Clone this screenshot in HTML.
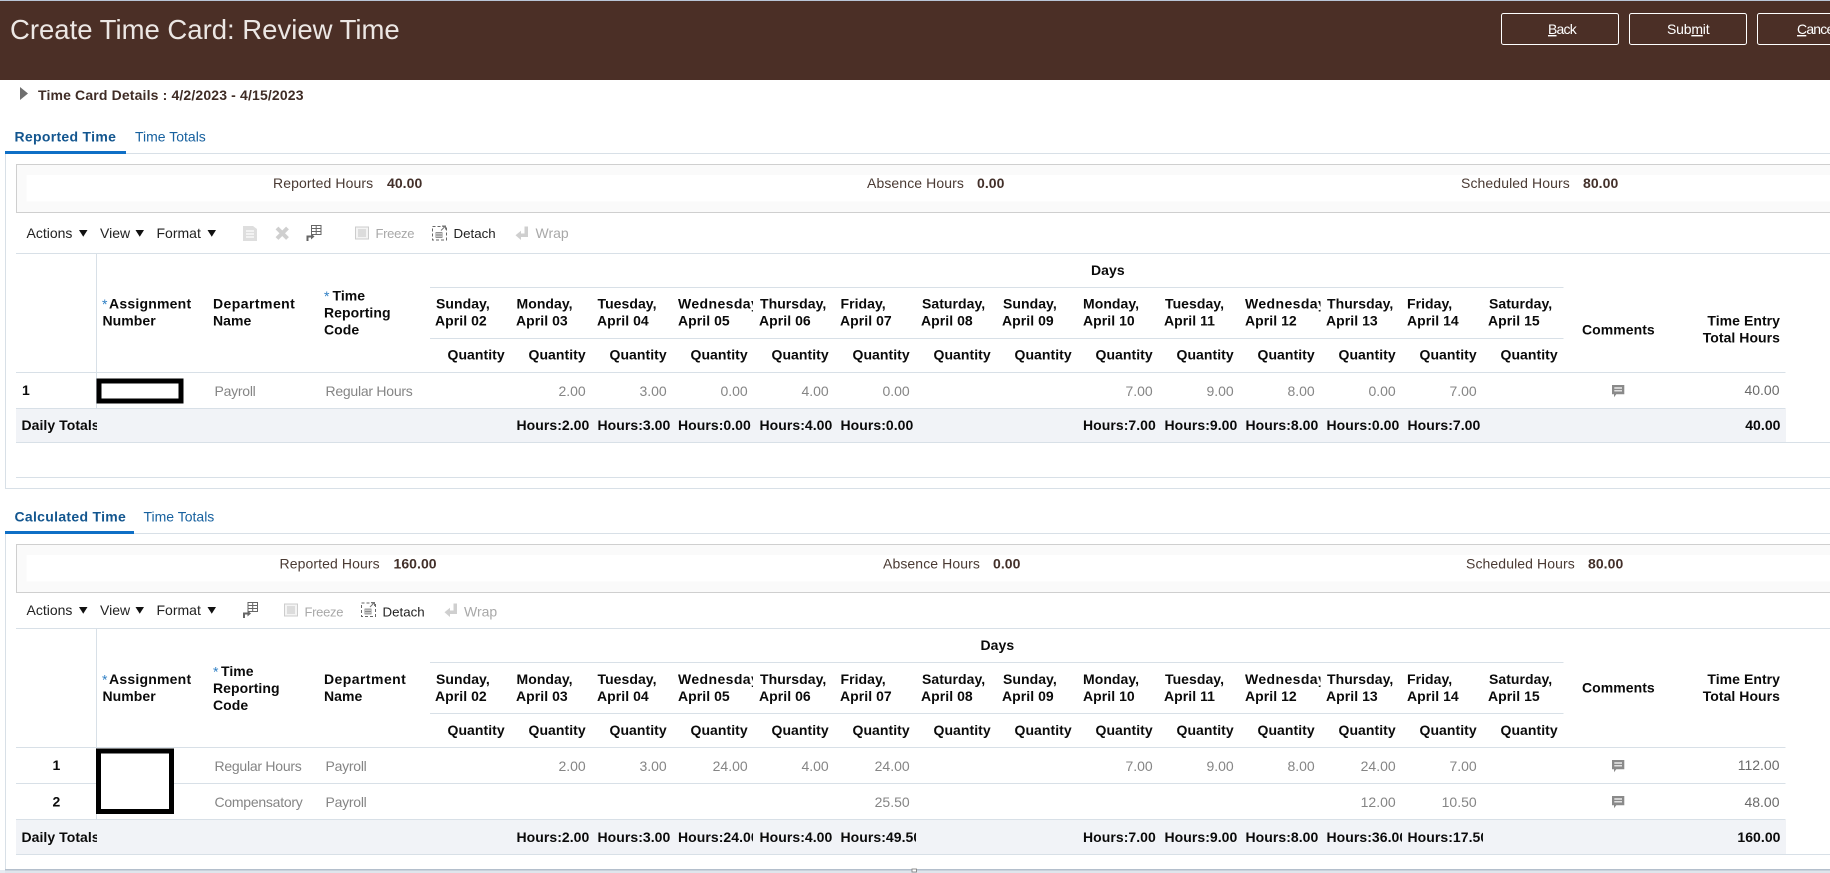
<!DOCTYPE html>
<html lang="en">
<head>
<meta charset="utf-8">
<title>Create Time Card: Review Time</title>
<style>
html,body{margin:0;padding:0;background:#fff;width:1830px;height:873px;overflow:hidden}
svg{display:block}
text{font-family:"Liberation Sans",Arial,sans-serif;font-size:14px;fill:#000}
.r{text-anchor:end}
.b{font-weight:700;fill:#0a0a0a;letter-spacing:.05px}
.v{fill:#858585}
.vt{fill:#858585;letter-spacing:-.25px}
.tot{fill:#6a6a6a}
.lab{fill:#4a3a33;letter-spacing:.1px}
.val{font-weight:700;fill:#43302a;letter-spacing:.05px}
.tb{fill:#222}
.dis{fill:#a8a8a8}
.fr{font-size:13px;letter-spacing:-.3px}
.de{font-size:13.3px}
.btn{fill:#fff;letter-spacing:-.2px}
.btn2{fill:#fff;letter-spacing:-.8px}
.ln{stroke:#d8e0e7;stroke-width:1;fill:none}
.u{text-decoration:underline}
.tabA{font-weight:700;fill:#13568f;letter-spacing:.3px}
.tab{fill:#17619f}
.star{fill:#2f7fc4}
.as{letter-spacing:.22px}
.dp{letter-spacing:.45px}
.wd{letter-spacing:.4px}
</style>
</head>
<body>
<svg width="1830" height="873" viewBox="0 0 1830 873" xmlns="http://www.w3.org/2000/svg">
<defs>
<clipPath id="c0"><rect x="16" y="0" width="81" height="873"/></clipPath>
<clipPath id="c3"><rect x="673" y="0" width="80" height="873"/></clipPath>
<clipPath id="c5"><rect x="835" y="0" width="81" height="873"/></clipPath>
<clipPath id="c10"><rect x="1240" y="0" width="80.500" height="873"/></clipPath>
<clipPath id="c11"><rect x="1321" y="0" width="81" height="873"/></clipPath>
<clipPath id="c12"><rect x="1402" y="0" width="81" height="873"/></clipPath>
<g id="cm"><path d="M0 0h12.300v9.300H4.300L2 12.300V9.300H0z" fill="#8a8a8a"/><path d="M2.300 3h7.700M2.300 5.800h7.700" stroke="#fff" stroke-width="1.200"/></g>
<g id="grid"><path d="M5.500 .5h9.500v9H5.500zM5.500 3.500h9.500M5.500 6.500h9.500M10.200 .5v9" fill="none" stroke="#666" stroke-width="1"/><path d="M1.500 16v-4.500H5.500" fill="none" stroke="#666" stroke-width="2"/><path d="M5 8.500l3.500 3-3.500 3z" fill="#666"/></g>
<g id="frz"><rect x=".5" y=".5" width="13" height="12" fill="#f4f4f4" stroke="#ccc"/><path d="M4 2.500v8M6 2.500v8M8 2.500v8M10 2.500v8" stroke="#c4c4c4" stroke-width="1"/></g>
<g id="det"><rect x=".5" y="2" width="14" height="13.500" fill="none" stroke="#666" stroke-dasharray="3 2"/><path d="M4 8h6v5H4zM4 10.500h6M6 8v5M8 8v5" fill="none" stroke="#777" stroke-width=".8"/><path d="M9 6l4-4M10 1.500h3.500V5" fill="none" stroke="#777" stroke-width="1"/></g>
<g id="wrp"><path d="M12.500 0v10.500H5.500V13.500L0 8.800 5.500 4.200V7h3.500V0z" fill="#cfcfcf"/></g>
</defs>

<!-- header -->
<rect x="0" y="0" width="1830" height="80" fill="#4b2f26"/>
<rect x="0" y="0" width="1830" height="1" fill="#b9c5d6"/>
<text x="10" y="39" style="font-size:27.500px;fill:#ece7e4">Create Time Card: Review Time</text>
<rect x="1501.500" y="13.500" width="117" height="31" rx="2" fill="none" stroke="#fff"/>
<rect x="1629.500" y="13.500" width="117" height="31" rx="2" fill="none" stroke="#fff"/>
<rect x="1757.500" y="13.500" width="118" height="31" rx="2" fill="none" stroke="#fff"/>
<text class="btn2" x="1548" y="34"><tspan class="u">B</tspan>ack</text>
<text class="btn" x="1667" y="34">Sub<tspan class="u">m</tspan>it</text>
<text class="btn2" x="1797" y="34"><tspan class="u">C</tspan>ancel</text>

<!-- details -->
<path d="M20 87l8 6.500-8 6.500z" fill="#6f6f6f"/>
<text x="38" y="100" style="font-weight:700;fill:#3f2c25;letter-spacing:.15px">Time Card Details : 4/2/2023 - 4/15/2023</text>

<!-- SECTION 1 -->
<text class="tabA" x="14.500" y="141.500">Reported Time</text>
<text class="tab" x="135" y="141.500">Time Totals</text>
<path class="ln" d="M5 153.500H1830"/>
<rect x="5" y="151" width="121" height="3" fill="#0f6fc6"/>
<path class="ln" d="M5.500 154V488.500H1830"/>

<rect x="16.500" y="164.500" width="1820" height="48" fill="#fafafa" stroke="#cfcfcf"/>
<rect x="26.500" y="175" width="1810" height="26.500" fill="#fff"/>
<text class="lab" x="273" y="188">Reported Hours</text><text class="val" x="387" y="188">40.00</text>
<text class="lab" x="867" y="188">Absence Hours</text><text class="val" x="977" y="188">0.00</text>
<text class="lab" x="1461" y="188">Scheduled Hours</text><text class="val" x="1583" y="188">80.00</text>

<text class="tb" x="26.500" y="238">Actions</text><path d="M79 230h8.500l-4.250 6.700z" fill="#111"/>
<text class="tb" x="100" y="238">View</text><path d="M135.500 230H144l-4.250 6.700z" fill="#111"/>
<text class="tb" x="156.500" y="238">Format</text><path d="M207.500 230H216l-4.250 6.700z" fill="#111"/>
<path d="M243 226h10l4 3v12h-14z" fill="#dedede"/><path d="M246 231h8M246 234h8M246 237h8" stroke="#fff" stroke-width="1.200"/>
<path d="M277 228l10.500 10.500M287.500 228L277 238.500" stroke="#cfcfcf" stroke-width="4"/>
<use href="#grid" x="306" y="225"/>
<use href="#frz" x="355" y="226.500"/><text class="dis fr" x="375.500" y="238">Freeze</text>
<use href="#det" x="432" y="224.500"/><text class="tb de" x="453.500" y="238">Detach</text>
<use href="#wrp" x="515.500" y="226.500"/><text class="dis" x="535.500" y="238">Wrap</text>

<path class="ln" d="M16 253.500H1830M96.500 254V408M430 287.500H1563.500M430 338.500H1563.500M16 372.500H1785.500M16 408.500H1785.500"/>
<rect x="16" y="409" width="1770" height="33" fill="#f1f3f7"/>
<path class="ln" d="M16 442.500H1830M16 477.500H1830"/>

<text class="b" x="1091" y="275">Days</text>
<text class="star" x="102" y="309">*</text><text class="b as" x="109" y="308.700">Assignment</text><text class="b" x="102.500" y="325.700">Number</text>
<text class="b dp" x="213" y="308.700">Department</text><text class="b" x="213" y="325.700">Name</text>
<text class="star" x="324" y="301">*</text><text class="b" x="332.500" y="300.700">Time</text><text class="b" x="324" y="317.700">Reporting</text><text class="b" x="324" y="334.700">Code</text>

<text class="b" x="436" y="308.700">Sunday,</text><text class="b" x="435" y="325.700">April 02</text>
<text class="b" x="516.500" y="308.700">Monday,</text><text class="b" x="516" y="325.700">April 03</text>
<text class="b" x="597.500" y="308.700">Tuesday,</text><text class="b" x="597" y="325.700">April 04</text>
<text class="b wd" x="678" y="308.700" clip-path="url(#c3)">Wednesday,</text><text class="b" x="678" y="325.700">April 05</text>
<text class="b" x="760" y="308.700">Thursday,</text><text class="b" x="759" y="325.700">April 06</text>
<text class="b" x="840.500" y="308.700">Friday,</text><text class="b" x="840" y="325.700">April 07</text>
<text class="b" x="922" y="308.700">Saturday,</text><text class="b" x="921" y="325.700">April 08</text>
<text class="b" x="1003" y="308.700">Sunday,</text><text class="b" x="1002" y="325.700">April 09</text>
<text class="b" x="1083" y="308.700">Monday,</text><text class="b" x="1083" y="325.700">April 10</text>
<text class="b" x="1165" y="308.700">Tuesday,</text><text class="b" x="1164" y="325.700">April 11</text>
<text class="b wd" x="1245" y="308.700" clip-path="url(#c10)">Wednesday,</text><text class="b" x="1245" y="325.700">April 12</text>
<text class="b" x="1327" y="308.700">Thursday,</text><text class="b" x="1326" y="325.700">April 13</text>
<text class="b" x="1407" y="308.700">Friday,</text><text class="b" x="1407" y="325.700">April 14</text>
<text class="b" x="1489" y="308.700">Saturday,</text><text class="b" x="1488" y="325.700">April 15</text>
<text class="b" x="1582" y="334.700">Comments</text>
<text class="b r" x="1780" y="325.700">Time Entry</text><text class="b r" x="1780" y="342.700">Total Hours</text>

<text class="b r" x="504.700" y="359.700">Quantity</text><text class="b r" x="585.700" y="359.700">Quantity</text><text class="b r" x="666.700" y="359.700">Quantity</text><text class="b r" x="747.700" y="359.700">Quantity</text><text class="b r" x="828.700" y="359.700">Quantity</text><text class="b r" x="909.700" y="359.700">Quantity</text><text class="b r" x="990.700" y="359.700">Quantity</text><text class="b r" x="1071.700" y="359.700">Quantity</text><text class="b r" x="1152.700" y="359.700">Quantity</text><text class="b r" x="1233.700" y="359.700">Quantity</text><text class="b r" x="1314.700" y="359.700">Quantity</text><text class="b r" x="1395.700" y="359.700">Quantity</text><text class="b r" x="1476.700" y="359.700">Quantity</text><text class="b r" x="1557.700" y="359.700">Quantity</text>

<text class="b" x="22" y="395">1</text>
<rect x="99" y="381" width="82" height="20" fill="#fff" stroke="#000" stroke-width="5"/>
<text class="vt" x="214.500" y="396">Payroll</text>
<text class="vt" x="325.500" y="396">Regular Hours</text>
<text class="v r" x="585.700" y="396">2.00</text><text class="v r" x="666.700" y="396">3.00</text><text class="v r" x="747.700" y="396">0.00</text><text class="v r" x="828.700" y="396">4.00</text><text class="v r" x="909.700" y="396">0.00</text>
<text class="v r" x="1152.700" y="396">7.00</text><text class="v r" x="1233.700" y="396">9.00</text><text class="v r" x="1314.700" y="396">8.00</text><text class="v r" x="1395.700" y="396">0.00</text><text class="v r" x="1476.700" y="396">7.00</text>
<use href="#cm" x="1612" y="385"/>
<text class="tot r" x="1779.500" y="395">40.00</text>

<text class="b" x="21.500" y="430" clip-path="url(#c0)">Daily Totals</text>
<text class="b" x="516.500" y="430">Hours:2.00</text><text class="b" x="597.500" y="430">Hours:3.00</text><text class="b" x="678" y="430">Hours:0.00</text><text class="b" x="759.500" y="430">Hours:4.00</text><text class="b" x="840.500" y="430">Hours:0.00</text>
<text class="b" x="1083" y="430">Hours:7.00</text><text class="b" x="1164.500" y="430">Hours:9.00</text><text class="b" x="1245.500" y="430">Hours:8.00</text><text class="b" x="1326.500" y="430">Hours:0.00</text><text class="b" x="1407.500" y="430">Hours:7.00</text>
<text class="b r" x="1780.500" y="430">40.00</text>

<!-- SECTION 2 -->
<text class="tabA" x="14.500" y="521.500">Calculated Time</text>
<text class="tab" x="143.500" y="521.500">Time Totals</text>
<path class="ln" d="M5 533.500H1830"/>
<rect x="5" y="531" width="129" height="3" fill="#0f6fc6"/>
<path class="ln" d="M5.500 534V870"/>

<rect x="16.500" y="544.500" width="1820" height="48" fill="#fafafa" stroke="#cfcfcf"/>
<rect x="26.500" y="555" width="1810" height="26.500" fill="#fff"/>
<text class="lab" x="279.500" y="568.500">Reported Hours</text><text class="val" x="393.500" y="568.500">160.00</text>
<text class="lab" x="883" y="568.500">Absence Hours</text><text class="val" x="993" y="568.500">0.00</text>
<text class="lab" x="1466" y="568.500">Scheduled Hours</text><text class="val" x="1588" y="568.500">80.00</text>

<text class="tb" x="26.500" y="615">Actions</text><path d="M79 607h8.500l-4.250 6.700z" fill="#111"/>
<text class="tb" x="100" y="615">View</text><path d="M135.500 607H144l-4.250 6.700z" fill="#111"/>
<text class="tb" x="156.500" y="615">Format</text><path d="M207.500 607H216l-4.250 6.700z" fill="#111"/>
<use href="#grid" x="242.500" y="602"/>
<use href="#frz" x="284" y="603.500"/><text class="dis fr" x="304.500" y="616.500">Freeze</text>
<use href="#det" x="361" y="601"/><text class="tb de" x="382.500" y="616.500">Detach</text>
<use href="#wrp" x="444.500" y="603.500"/><text class="dis" x="464" y="616.500">Wrap</text>

<path class="ln" d="M16 628.500H1830M96.500 629V819M430 662.500H1563.500M430 713.500H1563.500M16 747.500H1785.500M16 783.500H1785.500M16 819.500H1785.500"/>
<rect x="16" y="820" width="1770" height="34" fill="#f1f3f7"/>
<path class="ln" d="M16 854.500H1830"/>

<text class="b" x="980.500" y="650">Days</text>
<text class="star" x="102" y="684.500">*</text><text class="b as" x="109" y="684">Assignment</text><text class="b" x="102.500" y="701">Number</text>
<text class="star" x="213" y="676.500">*</text><text class="b" x="221" y="676">Time</text><text class="b" x="213" y="693">Reporting</text><text class="b" x="213" y="710">Code</text>
<text class="b dp" x="324" y="684">Department</text><text class="b" x="324" y="701">Name</text>

<text class="b" x="436" y="684">Sunday,</text><text class="b" x="435" y="701">April 02</text>
<text class="b" x="516.500" y="684">Monday,</text><text class="b" x="516" y="701">April 03</text>
<text class="b" x="597.500" y="684">Tuesday,</text><text class="b" x="597" y="701">April 04</text>
<text class="b wd" x="678" y="684" clip-path="url(#c3)">Wednesday,</text><text class="b" x="678" y="701">April 05</text>
<text class="b" x="760" y="684">Thursday,</text><text class="b" x="759" y="701">April 06</text>
<text class="b" x="840.500" y="684">Friday,</text><text class="b" x="840" y="701">April 07</text>
<text class="b" x="922" y="684">Saturday,</text><text class="b" x="921" y="701">April 08</text>
<text class="b" x="1003" y="684">Sunday,</text><text class="b" x="1002" y="701">April 09</text>
<text class="b" x="1083" y="684">Monday,</text><text class="b" x="1083" y="701">April 10</text>
<text class="b" x="1165" y="684">Tuesday,</text><text class="b" x="1164" y="701">April 11</text>
<text class="b wd" x="1245" y="684" clip-path="url(#c10)">Wednesday,</text><text class="b" x="1245" y="701">April 12</text>
<text class="b" x="1327" y="684">Thursday,</text><text class="b" x="1326" y="701">April 13</text>
<text class="b" x="1407" y="684">Friday,</text><text class="b" x="1407" y="701">April 14</text>
<text class="b" x="1489" y="684">Saturday,</text><text class="b" x="1488" y="701">April 15</text>
<text class="b" x="1582" y="692.700">Comments</text>
<text class="b r" x="1780" y="684">Time Entry</text><text class="b r" x="1780" y="701">Total Hours</text>

<text class="b r" x="504.700" y="735">Quantity</text><text class="b r" x="585.700" y="735">Quantity</text><text class="b r" x="666.700" y="735">Quantity</text><text class="b r" x="747.700" y="735">Quantity</text><text class="b r" x="828.700" y="735">Quantity</text><text class="b r" x="909.700" y="735">Quantity</text><text class="b r" x="990.700" y="735">Quantity</text><text class="b r" x="1071.700" y="735">Quantity</text><text class="b r" x="1152.700" y="735">Quantity</text><text class="b r" x="1233.700" y="735">Quantity</text><text class="b r" x="1314.700" y="735">Quantity</text><text class="b r" x="1395.700" y="735">Quantity</text><text class="b r" x="1476.700" y="735">Quantity</text><text class="b r" x="1557.700" y="735">Quantity</text>

<rect x="98.500" y="751" width="73" height="60.500" fill="#fff" stroke="#000" stroke-width="5"/>
<text class="b" x="52.500" y="770">1</text>
<text class="vt" x="214.500" y="771">Regular Hours</text>
<text class="vt" x="325.500" y="771">Payroll</text>
<text class="v r" x="585.700" y="771">2.00</text><text class="v r" x="666.700" y="771">3.00</text><text class="v r" x="747.700" y="771">24.00</text><text class="v r" x="828.700" y="771">4.00</text><text class="v r" x="909.700" y="771">24.00</text>
<text class="v r" x="1152.700" y="771">7.00</text><text class="v r" x="1233.700" y="771">9.00</text><text class="v r" x="1314.700" y="771">8.00</text><text class="v r" x="1395.700" y="771">24.00</text><text class="v r" x="1476.700" y="771">7.00</text>
<use href="#cm" x="1612" y="760"/>
<text class="tot r" x="1779.500" y="770">112.00</text>

<text class="b" x="52.500" y="806.700">2</text>
<text class="vt" x="214.500" y="807">Compensatory</text>
<text class="vt" x="325.500" y="807">Payroll</text>
<text class="v r" x="909.700" y="807">25.50</text><text class="v r" x="1395.700" y="807">12.00</text><text class="v r" x="1476.700" y="807">10.50</text>
<use href="#cm" x="1612" y="796"/>
<text class="tot r" x="1779.500" y="807">48.00</text>

<text class="b" x="21.500" y="842" clip-path="url(#c0)">Daily Totals</text>
<text class="b" x="516.500" y="842">Hours:2.00</text><text class="b" x="597.500" y="842">Hours:3.00</text><text class="b" x="678" y="842" clip-path="url(#c3)">Hours:24.00</text><text class="b" x="759.500" y="842">Hours:4.00</text><text class="b" x="840.500" y="842" clip-path="url(#c5)">Hours:49.50</text>
<text class="b" x="1083" y="842">Hours:7.00</text><text class="b" x="1164.500" y="842">Hours:9.00</text><text class="b" x="1245.500" y="842">Hours:8.00</text><text class="b" x="1326.500" y="842" clip-path="url(#c11)">Hours:36.00</text><text class="b" x="1407.500" y="842" clip-path="url(#c12)">Hours:17.50</text>
<text class="b r" x="1780.500" y="842">160.00</text>

<!-- bottom edge -->
<rect x="5" y="869" width="1825" height="1.500" fill="#b4bfcc"/>
<rect x="5" y="870.500" width="1825" height="2.500" fill="#dfe5ec"/>
<rect x="0" y="870" width="5" height="3" fill="#e6ebf1"/>
<rect x="912" y="869" width="4.500" height="3" fill="#fff" stroke="#777" stroke-width=".8"/>
</svg>
</body>
</html>
